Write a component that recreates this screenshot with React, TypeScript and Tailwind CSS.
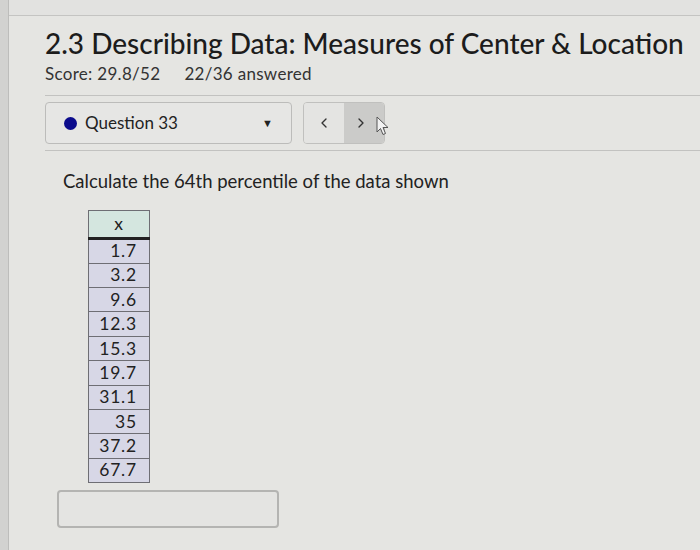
import { ChevronLeft, ChevronRight } from 'lucide-react';

const values = ['1.7', '3.2', '9.6', '12.3', '15.3', '19.7', '31.1', '35', '37.2', '67.7'];

export default function App() {
  return (
    <div className="w-[700px] h-[550px] overflow-hidden bg-[#d9d9d7] flex font-['Lato',sans-serif] text-[#1c1c1c]">
      {/* left frame strip */}
      <div className="w-[9px] shrink-0 bg-[#d2d2d0] border-r border-[#bdbdbb]" />

      <div className="flex-1 flex flex-col">
        {/* top band */}
        <div className="h-[16px] shrink-0 bg-[#e2e2e0] border-b border-[#c4c4c2]" />

        <div className="flex-1 bg-[#e5e5e2] pl-[36px] relative">
          <h1 className="mt-[10px] text-[28px] leading-[34px] font-medium whitespace-nowrap">
            2.3 Describing Data: Measures of Center &amp; Location
          </h1>
          <div className="mt-[3px] flex gap-[24px] text-[17px] leading-[22px] tracking-[0.3px] text-[#333]">
            <span>Score: 29.8/52</span>
            <span>22/36 answered</span>
          </div>

          <div className="mt-[10px] border-t border-[#c2c2c0]" />

          {/* question selector */}
          <div className="mt-[6px] flex items-center gap-[11px] h-[42px]">
            <div className="w-[247px] h-full flex items-center rounded-[4px] border border-[#bcbcba] bg-[#e6e6e4] pl-[18px] pr-[18px]">
              <span className="w-[13px] h-[13px] rounded-full bg-[#0b0b8c]" />
              <span className="ml-[8px] text-[17px] text-[#222]">Question 33</span>
              <span className="ml-auto text-[11px] text-[#222]">▼</span>
            </div>
            <div className="w-[82px] h-full flex rounded-[4px] border border-[#c0c0be] overflow-hidden">
              <div className="w-[40px] flex items-center justify-center bg-[#e4e4e2]">
                <ChevronLeft size={16} strokeWidth={2} className="text-[#333]" />
              </div>
              <div className="flex-1 flex items-center justify-center bg-[#cbcbc9]">
                <ChevronRight size={16} strokeWidth={2} className="text-[#333] -ml-[6px]" />
              </div>
            </div>
          </div>

          {/* mouse cursor */}
          <svg className="absolute left-[367px] top-[100px]" width="14" height="20" viewBox="0 0 14 20">
            <path d="M1 1 L1 16 L4.5 12.5 L7 18.5 L9.5 17.5 L7 11.5 L12 11.5 Z" fill="#f2f2f2" stroke="#555" strokeWidth="1" strokeLinejoin="round" />
          </svg>

          <div className="mt-[6px] border-t border-[#c2c2c0]" />

          <p className="mt-[19px] ml-[18px] text-[18.5px] leading-[22px] text-[#222]">
            Calculate the 64th percentile of the data shown
          </p>

          <table className="mt-[18px] ml-[43px] w-[62px] border-collapse text-[17.5px] tracking-[0.8px] text-[#222]">
            <thead>
              <tr>
                <th className="h-[24px] bg-[#d4e6df] border border-[#6e6e74] border-b-[3px] border-b-[#222] font-normal text-center">x</th>
              </tr>
            </thead>
            <tbody>
              {values.map((v) => (
                <tr key={v}>
                  <td className="h-[24.4px] leading-[22px] bg-[#d7d7e6] border border-[#6e6e74] text-right pr-[12px]">{v}</td>
                </tr>
              ))}
            </tbody>
          </table>

          <div className="mt-[7px] ml-[12px] w-[222px] h-[38px] rounded-[4px] border-2 border-[#b4b4b2] bg-[#e4e4e2]" />
        </div>
      </div>
    </div>
  );
}
